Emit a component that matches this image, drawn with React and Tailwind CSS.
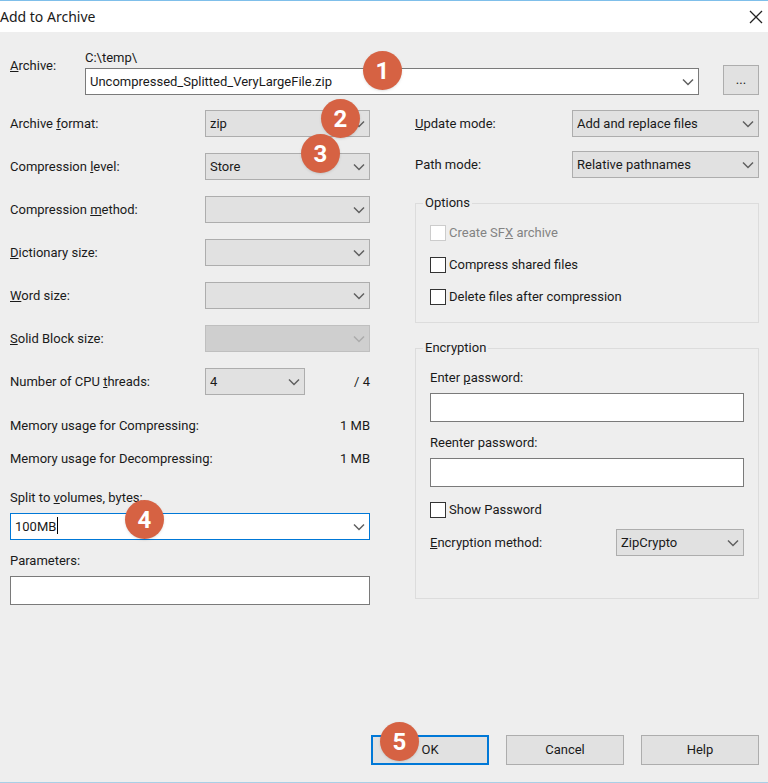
import React, { useState } from 'react'
import clsx from 'clsx'

const METHODS = [
	{ id: 'method', label: <>Compression <u>m</u>ethod:</> },
	{ id: 'dictionary', label: <><u>D</u>ictionary size:</> },
	{ id: 'word', label: <><u>W</u>ord size:</> },
	{ id: 'block', label: <><u>S</u>olid Block size:</>, disabled: true },
]

function Chevron({ className }) {
	return (
		<svg
			viewBox="0 0 12 8"
			className={clsx('absolute right-[5px] top-1/2 -translate-y-1/2 w-3 h-2 pointer-events-none', className)}
			fill="none"
			stroke="currentColor"
			strokeWidth="1.5"
		>
			<path d="M1 1.5l5 5 5-5" />
		</svg>
	)
}

function Select({ id, options = [''], disabled, className }) {
	return (
		<div className={clsx('relative h-[27px]', className)}>
			<select
				id={id}
				disabled={disabled}
				className={clsx(
					'appearance-none block w-full h-full pl-1 pr-5 border outline-none',
					disabled ? 'bg-[#cfcfcf] border-[#bfbfbf]' : 'bg-[#e1e1e1] border-[#adadad]',
				)}
			>
				{options.map((option) => (
					<option key={option}>{option}</option>
				))}
			</select>
			<Chevron className={disabled ? 'text-[#acacac]' : 'text-[#606060]'} />
		</div>
	)
}

function Row({ id, label, children }) {
	return (
		<div className="flex items-center justify-between">
			<label htmlFor={id}>{label}</label>
			{children}
		</div>
	)
}

function Check({ label, disabled }) {
	return (
		<label className={clsx('flex items-center gap-[3px]', disabled && 'text-[#838383]')}>
			<input
				type="checkbox"
				disabled={disabled}
				className={clsx(
					'appearance-none w-4 h-4 bg-white border checked:bg-[#0078d7]',
					disabled ? 'border-[#cccccc]' : 'border-[#333333]',
				)}
			/>
			<span>{label}</span>
		</label>
	)
}

function Badge({ children, className }) {
	return (
		<span
			className={clsx(
				'absolute z-10 flex items-center justify-center w-[39px] h-[39px] rounded-full bg-[#d66243] text-white text-[24px] font-bold shadow-sm pointer-events-none',
				className,
			)}
		>
			{children}
		</span>
	)
}

function Group({ title, children, className }) {
	return (
		<fieldset className={clsx('border border-[#dcdcdc] px-[14px] pt-[10px]', className)}>
			<legend className="-ml-[7px] px-[2px]">{title}</legend>
			{children}
		</fieldset>
	)
}

const textBox = 'block w-full h-[29px] px-1 bg-white border border-[#7a7a7a] outline-none'
const button = 'w-[118px] h-[30px] bg-[#e1e1e1]'

function App() {
	const [archive, setArchive] = useState('Uncompressed_Splitted_VeryLargeFile.zip')
	const [volume, setVolume] = useState('100MB')

	return (
		<div className="min-h-screen flex flex-col bg-[#eeeeee] border-t border-b border-t-[#7fbfea] border-b-[#a9cfe6] font-['Roboto',sans-serif] text-[13px] leading-[20px] text-[#1a1a1a]">
			<header className="h-[31px] flex items-center justify-between bg-white pr-[5px]">
				<h1 className="font-['Noto_Sans',sans-serif] text-[14px]">Add to Archive</h1>
				<button aria-label="Close">
					<svg viewBox="0 0 14 14" className="w-[14px] h-[14px]" fill="none" stroke="#222222" strokeWidth="1.3">
						<path d="M1 1l12 12M13 1L1 13" />
					</svg>
				</button>
			</header>

			<main className="flex-1 flex flex-col pl-[10px] pr-[9px] pt-4 pb-[17px]">
				<div className="flex items-end">
					<label htmlFor="archive" className="w-[75px] self-start pt-2">
						<u>A</u>rchive:
					</label>
					<div className="flex-1">
						<div>C:\temp\</div>
						<div className="relative">
							<input
								id="archive"
								value={archive}
								onChange={(e) => setArchive(e.target.value)}
								className="block w-full h-[27px] pl-1 pr-6 bg-white border border-[#7a7a7a] outline-none"
							/>
							<Chevron className="text-[#606060]" />
							<Badge className="left-[278px] -top-[17px]">1</Badge>
						</div>
					</div>
					<button className="ml-6 w-[36px] h-[30px] bg-[#e1e1e1] border border-[#adadad]">...</button>
				</div>

				<div className="grid grid-cols-[360fr_344fr] gap-[45px] mt-[15px]">
					<div>
						<div className="flex flex-col gap-4">
							<Row id="format" label={<>Archive <u>f</u>ormat:</>}>
								<div className="relative">
									<Select id="format" options={['zip']} className="w-[165px]" />
									<Badge className="right-[10px] -top-[11px]">2</Badge>
								</div>
							</Row>
							<Row id="level" label={<>Compression <u>l</u>evel:</>}>
								<div className="relative">
									<Select id="level" options={['Store']} className="w-[165px]" />
									<Badge className="right-[30px] -top-[19px]">3</Badge>
								</div>
							</Row>
							{METHODS.map(({ id, label, disabled }) => (
								<Row key={id} id={id} label={label}>
									<Select id={id} disabled={disabled} className="w-[165px]" />
								</Row>
							))}
							<Row id="threads" label={<>Number of CPU <u>t</u>hreads:</>}>
								<div className="flex w-[165px] items-center justify-between">
									<Select id="threads" options={['4']} className="w-[100px]" />
									<span>/ 4</span>
								</div>
							</Row>
						</div>

						<div className="flex flex-col gap-[13px] mt-[21px]">
							<div className="flex justify-between">
								<span>Memory usage for Compressing:</span>
								<span>1 MB</span>
							</div>
							<div className="flex justify-between">
								<span>Memory usage for Decompressing:</span>
								<span>1 MB</span>
							</div>
						</div>

						<label htmlFor="volume" className="block mt-[19px]">
							Split to <u>v</u>olumes, bytes:
						</label>
						<div className="relative mt-[5px]">
							<input
								id="volume"
								value={volume}
								onChange={(e) => setVolume(e.target.value)}
								className="block w-full h-[27px] pl-1 pr-6 bg-white border border-[#0078d7] outline-none"
							/>
							<span className="absolute left-[47px] top-1 w-px h-[17px] bg-black" />
							<Chevron className="text-[#606060]" />
							<Badge className="left-[115px] -top-[13px]">4</Badge>
						</div>
						<label htmlFor="parameters" className="block mt-[11px]">
							Parameters:
						</label>
						<input id="parameters" className={clsx(textBox, 'mt-[5px]')} />
					</div>

					<div>
						<div className="flex flex-col gap-[14px]">
							<Row id="update" label={<><u>U</u>pdate mode:</>}>
								<Select id="update" options={['Add and replace files']} className="w-[187px]" />
							</Row>
							<Row id="path" label="Path mode:">
								<Select id="path" options={['Relative pathnames']} className="w-[187px]" />
							</Row>
						</div>

						<Group title="Options" className="mt-[15px] pb-[15px]">
							<div className="flex flex-col gap-3">
								<Check label={<>Create SF<u>X</u> archive</>} disabled />
								<Check label="Compress shared files" />
								<Check label="Delete files after compression" />
							</div>
						</Group>

						<Group title="Encryption" className="mt-[15px] pb-[42px]">
							<label htmlFor="password" className="block">
								Enter <u>p</u>assword:
							</label>
							<input id="password" type="password" className={clsx(textBox, 'mt-[5px]')} />
							<label htmlFor="reenter" className="block mt-[11px]">
								Reenter password:
							</label>
							<input id="reenter" type="password" className={clsx(textBox, 'mt-[5px] mb-[13px]')} />
							<Check label="Show Password" />
							<div className="mt-[9px]">
								<Row id="encryption" label={<><u>E</u>ncryption method:</>}>
									<Select id="encryption" options={['ZipCrypto']} className="w-[128px]" />
								</Row>
							</div>
						</Group>
					</div>
				</div>

				<footer className="mt-auto pt-6 flex justify-end gap-[17px]">
					<div className="relative">
						<button className={clsx(button, 'border-2 border-[#0078d7]')}>OK</button>
						<Badge className="left-[9px] -top-[13px]">5</Badge>
					</div>
					<button className={clsx(button, 'border border-[#adadad]')}>Cancel</button>
					<button className={clsx(button, 'border border-[#adadad]')}>Help</button>
				</footer>
			</main>
		</div>
	)
}

export default App
